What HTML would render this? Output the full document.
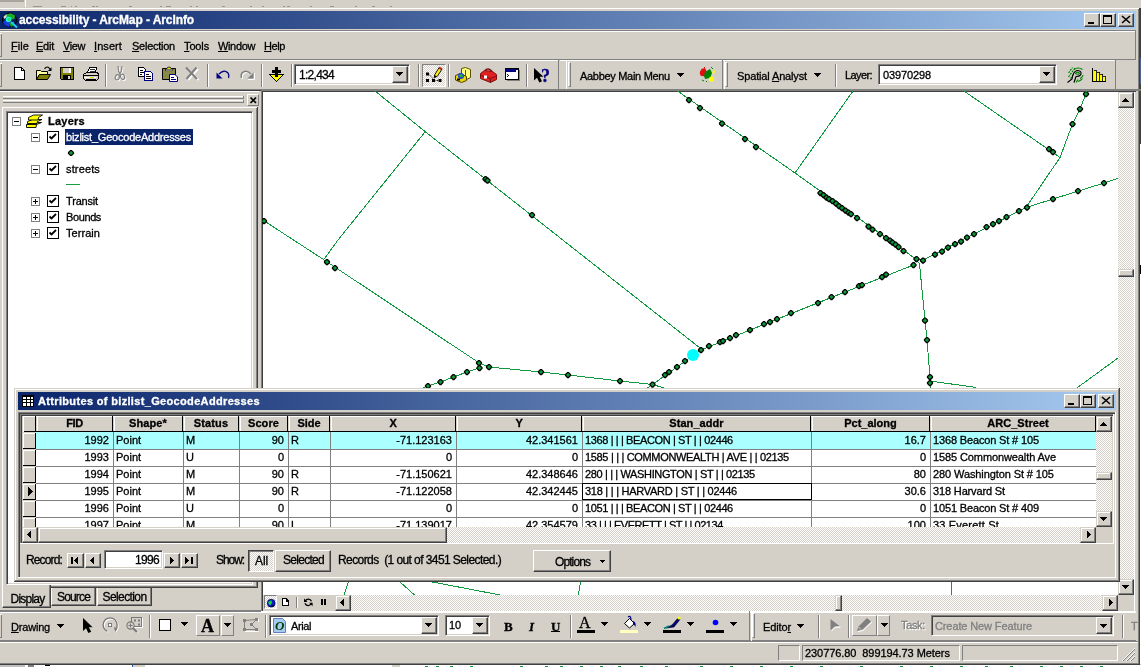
<!DOCTYPE html>
<html>
<head>
<meta charset="utf-8">
<title>accessibility - ArcMap - ArcInfo</title>
<style>
html,body{margin:0;padding:0;}
body{width:1141px;height:667px;overflow:hidden;background:#d4d0c8;}
#root{position:absolute;left:0;top:0;width:1141px;height:667px;overflow:hidden;background:#d4d0c8;will-change:transform;font-family:"Liberation Sans",sans-serif;font-size:11px;color:#000;}
#root div,#root svg{position:absolute;box-sizing:border-box;}
#root svg{display:block;}
.dither{background-image:conic-gradient(#fff 25%,#d4d0c8 0 50%,#fff 0 75%,#d4d0c8 0);background-size:2px 2px;}
u{text-decoration:underline;}
</style>
</head>
<body>
<div id="root">
<div style="left:0px;top:0px;width:1141px;height:8px;background:#d4d0c8;"></div>
<div style="left:0px;top:0px;width:24px;height:2px;background:#a9a6a0;"></div>
<div style="left:25px;top:0px;width:1px;height:7px;background:#ffffff;"></div>
<div style="left:33px;top:6px;width:8px;height:1px;background:#9a9791;"></div>
<div style="left:41px;top:6px;width:1px;height:1px;background:#9a9791;"></div>
<div style="left:61px;top:6px;width:5px;height:1px;background:#9a9791;"></div>
<div style="left:71px;top:6px;width:1px;height:1px;background:#9a9791;"></div>
<div style="left:75px;top:6px;width:2px;height:1px;background:#9a9791;"></div>
<div style="left:92px;top:6px;width:3px;height:1px;background:#9a9791;"></div>
<div style="left:96px;top:6px;width:2px;height:1px;background:#9a9791;"></div>
<div style="left:129px;top:6px;width:3px;height:1px;background:#9a9791;"></div>
<div style="left:160px;top:6px;width:2px;height:1px;background:#9a9791;"></div>
<div style="left:166px;top:6px;width:5px;height:1px;background:#9a9791;"></div>
<div style="left:190px;top:6px;width:2px;height:1px;background:#9a9791;"></div>
<div style="left:196px;top:6px;width:2px;height:1px;background:#9a9791;"></div>
<div style="left:222px;top:6px;width:3px;height:1px;background:#9a9791;"></div>
<div style="left:250px;top:6px;width:2px;height:1px;background:#9a9791;"></div>
<div style="left:262px;top:6px;width:2px;height:1px;background:#9a9791;"></div>
<div style="left:283px;top:6px;width:2px;height:1px;background:#9a9791;"></div>
<div style="left:287px;top:6px;width:3px;height:1px;background:#9a9791;"></div>
<div style="left:310px;top:6px;width:2px;height:1px;background:#9a9791;"></div>
<div style="left:330px;top:6px;width:4px;height:1px;background:#9a9791;"></div>
<div style="left:355px;top:6px;width:2px;height:1px;background:#9a9791;"></div>
<div style="left:372px;top:6px;width:3px;height:1px;background:#9a9791;"></div>
<div style="left:390px;top:6px;width:2px;height:1px;background:#9a9791;"></div>
<div style="left:0px;top:8px;width:1139px;height:1px;background:#ffffff;"></div>
<div style="left:0px;top:9px;width:1138px;height:1px;background:#d4d0c8;"></div>
<div style="left:1138px;top:9px;width:1px;height:655px;background:#808080;"></div>
<div style="left:1139px;top:8px;width:1px;height:657px;background:#404040;"></div>
<div style="left:0px;top:663px;width:1139px;height:1px;background:#808080;"></div>
<div style="left:0px;top:664px;width:1140px;height:1px;background:#404040;"></div>
<div style="left:1140px;top:0px;width:1px;height:8px;background:#d4d0c8;"></div>
<div style="left:1140px;top:8px;width:1px;height:50px;background:#404040;"></div>
<div style="left:1140px;top:58px;width:1px;height:26px;background:#506090;"></div>
<div style="left:1140px;top:84px;width:1px;height:60px;background:#404040;"></div>
<div style="left:1140px;top:144px;width:1px;height:520px;background:#fff;"></div>
<div style="left:1140px;top:265px;width:1px;height:9px;background:#000;"></div>
<div style="left:0px;top:11px;width:1136px;height:18px;background:linear-gradient(90deg,#0a246a 0%,#a6caf0 100%);"></div>
<svg style="left:2px;top:12px;width:16px;height:16px;overflow:visible" viewBox="0 0 16 16"><circle cx="7.5" cy="8" r="7" fill="#101860" stroke="#000" stroke-width="1"/>
<path d="M1,10 Q2,14 7,15 L8,11 L4,8 Z" fill="#1838e0"/>
<path d="M4,2.5 L9,1.2 L13,3.5 L12.5,7 L9,7.5 L7,5 L4,5.5 Z" fill="#18b028"/>
<path d="M1.5,4.5 L4.5,2 L4.5,5.5 L2,7 Z" fill="#d8d8d8"/>
<path d="M7,11 L12,9.5 L12.5,13 L9,15 Z" fill="#10a020"/>
<circle cx="6.5" cy="7.5" r="2.8" fill="#20f0e8"/><path d="M5.5,6 L8,6 L8.5,8.5 L6,9 Z" fill="#20e840"/>
<path d="M9,10 L15,15.5" stroke="#20d0ff" stroke-width="1.8"/></svg>
<div style="left:19.00px;top:12px;font-size:12px;line-height:16px;height:16px;white-space:pre;color:#fff;-webkit-text-stroke:0.3px #fff;letter-spacing:-0.087px;font-weight:bold;">accessibility - ArcMap - ArcInfo</div>
<div style="left:1084px;top:13px;width:16px;height:14px;background:#d4d0c8;border:1px solid;border-color:#ffffff #404040 #404040 #ffffff;box-shadow:inset -1px -1px 0 #808080;"></div>
<div style="left:1100px;top:13px;width:16px;height:14px;background:#d4d0c8;border:1px solid;border-color:#ffffff #404040 #404040 #ffffff;box-shadow:inset -1px -1px 0 #808080;"></div>
<div style="left:1118px;top:13px;width:16px;height:14px;background:#d4d0c8;border:1px solid;border-color:#ffffff #404040 #404040 #ffffff;box-shadow:inset -1px -1px 0 #808080;"></div>
<div style="left:1088px;top:22px;width:6px;height:2px;background:#000;"></div>
<div style="left:1103px;top:15px;width:9px;height:9px;border:1px solid #000;border-top-width:2px;"></div>
<svg style="left:1122px;top:16px;width:8px;height:7px;overflow:visible" viewBox="0 0 8 7"><path d="M0,0 L8,7 M8,0 L0,7" stroke="#000" stroke-width="1.6" fill="none"/></svg>
<div style="left:0px;top:30px;width:1136px;height:1px;background:#808080;"></div>
<div style="left:0px;top:31px;width:1136px;height:1px;background:#ffffff;"></div>
<div style="left:1135px;top:31px;width:1px;height:28px;background:#808080;"></div>
<div style="left:0px;top:33px;width:2px;height:1px;background:#ffffff;"></div>
<div style="left:1px;top:34px;width:1px;height:23px;background:#808080;"></div>
<div style="left:0px;top:56px;width:2px;height:1px;background:#808080;"></div>
<div style="left:0px;top:59px;width:1136px;height:1px;background:#808080;"></div>
<div style="left:11.00px;top:38px;font-size:11px;line-height:16px;height:16px;white-space:pre;color:#000;-webkit-text-stroke:0.3px #000;letter-spacing:0.070px;"><u>F</u>ile</div>
<div style="left:36.00px;top:38px;font-size:11px;line-height:16px;height:16px;white-space:pre;color:#000;-webkit-text-stroke:0.3px #000;letter-spacing:-0.242px;"><u>E</u>dit</div>
<div style="left:63.00px;top:38px;font-size:11px;line-height:16px;height:16px;white-space:pre;color:#000;-webkit-text-stroke:0.3px #000;letter-spacing:-0.410px;"><u>V</u>iew</div>
<div style="left:94.00px;top:38px;font-size:11px;line-height:16px;height:16px;white-space:pre;color:#000;-webkit-text-stroke:0.3px #000;letter-spacing:0.078px;"><u>I</u>nsert</div>
<div style="left:132.00px;top:38px;font-size:11px;line-height:16px;height:16px;white-space:pre;color:#000;-webkit-text-stroke:0.3px #000;letter-spacing:-0.253px;"><u>S</u>election</div>
<div style="left:184.00px;top:38px;font-size:11px;line-height:16px;height:16px;white-space:pre;color:#000;-webkit-text-stroke:0.3px #000;letter-spacing:-0.138px;"><u>T</u>ools</div>
<div style="left:218.00px;top:38px;font-size:11px;line-height:16px;height:16px;white-space:pre;color:#000;-webkit-text-stroke:0.3px #000;letter-spacing:-0.354px;"><u>W</u>indow</div>
<div style="left:264.00px;top:38px;font-size:11px;line-height:16px;height:16px;white-space:pre;color:#000;-webkit-text-stroke:0.3px #000;letter-spacing:-0.406px;"><u>H</u>elp</div>
<div style="left:0px;top:60px;width:1116px;height:1px;background:#ffffff;"></div>
<div style="left:0px;top:89px;width:1141px;height:1px;background:#808080;"></div>
<div style="left:1115px;top:60px;width:1px;height:29px;background:#808080;"></div>
<div style="left:0px;top:63px;width:2px;height:1px;background:#ffffff;"></div>
<div style="left:1px;top:64px;width:1px;height:23px;background:#808080;"></div>
<div style="left:0px;top:86px;width:2px;height:1px;background:#808080;"></div>
<div style="left:558px;top:60px;width:1px;height:29px;background:#808080;"></div>
<div style="left:559px;top:60px;width:1px;height:29px;background:#d4d0c8;"></div>
<div style="left:566px;top:60px;width:1px;height:29px;background:#ffffff;"></div>
<div style="left:568px;top:62px;width:3px;height:25px;border:1px solid;border-color:#ffffff #808080 #808080 #ffffff;border-bottom-color:#808080;"></div>
<div style="left:722px;top:60px;width:1px;height:29px;background:#808080;"></div>
<div style="left:724px;top:60px;width:1px;height:29px;background:#ffffff;"></div>
<div style="left:725px;top:62px;width:3px;height:25px;border:1px solid;border-color:#ffffff #808080 #808080 #ffffff;border-bottom-color:#808080;"></div>
<svg style="left:14px;top:67px;width:12px;height:14px;overflow:visible" viewBox="0 0 12 14" shape-rendering="crispEdges"><path d="M0.5,0.5 H7.5 L10.5,3.5 V12.5 H0.5 Z" fill="#fff" stroke="#000"/><path d="M7.5,0.5 V3.5 H10.5" fill="none" stroke="#000"/></svg>
<svg style="left:36px;top:66px;width:16px;height:15px;overflow:visible" viewBox="0 0 16 15"><path d="M0.5,4.5 H4.5 L5.5,5.5 H11.5 V8.5 H3.5 L0.5,13.5 Z" fill="#ffffa0" stroke="#000"/>
<path d="M0.5,13.5 L3.5,8.5 H14.5 L11.5,13.5 Z" fill="#808000" stroke="#000"/>
<path d="M8.5,2.8 Q11.2,-0.8 14,3" fill="none" stroke="#000" stroke-width="1.1"/><path d="M15.5,1.2 V5 H11.8 Z" fill="#000"/></svg>
<svg style="left:60px;top:67px;width:15px;height:14px;overflow:visible" viewBox="0 0 15 14" shape-rendering="crispEdges"><path d="M0.5,0.5 H13.5 V12.5 H1.5 L0.5,11.5 Z" fill="#808000" stroke="#000"/>
<rect x="3" y="1" width="8" height="5" fill="#d4d0c8"/><rect x="9" y="1" width="2" height="5" fill="#fff"/>
<rect x="3" y="8" width="8" height="5" fill="#000"/><rect x="8" y="9" width="2" height="3" fill="#d4d0c8"/></svg>
<svg style="left:83px;top:67px;width:17px;height:15px;overflow:visible" viewBox="0 0 17 15" shape-rendering="crispEdges"><path d="M4.5,5.5 L6.5,0.5 H13.5 L12.5,5.5" fill="#fff" stroke="#000"/>
<path d="M7,2.5 H12 M6.5,4 H11.5" stroke="#000" stroke-width="0.8"/>
<path d="M0.5,7.5 L3.5,5.5 H14.5 L15.5,7.5 V11.5 L13.5,13.5 H2.5 L0.5,11.5 Z" fill="#d4d0c8" stroke="#000"/>
<path d="M1,8.5 H15" stroke="#000"/><path d="M1,10.5 H13" stroke="#fff"/><rect x="7" y="9.5" width="4" height="1.5" fill="#e0e000"/>
<path d="M2.5,12.5 H13" stroke="#000"/></svg>
<div style="left:105px;top:64px;width:1px;height:23px;background:#808080;"></div>
<div style="left:106px;top:64px;width:1px;height:23px;background:#ffffff;"></div>
<svg style="left:114px;top:66px;width:12px;height:15px;overflow:visible" viewBox="0 0 12 15"><g fill="none" stroke="#fff" transform="translate(1,1)"><path d="M4,0 L4.6,5 L6.6,8.5 M8,0 L7.4,5 L5.2,8.5"/><ellipse cx="3.3" cy="11.3" rx="2" ry="2.7" transform="rotate(20 3.3 11.3)"/><ellipse cx="8.6" cy="10.8" rx="2" ry="2.7" transform="rotate(-20 8.6 10.8)"/></g>
<g fill="none" stroke="#808080" stroke-width="1.1"><path d="M4,0 L4.6,5 L6.6,8.5 M8,0 L7.4,5 L5.2,8.5"/><ellipse cx="3.3" cy="11.3" rx="2" ry="2.7" transform="rotate(20 3.3 11.3)"/><ellipse cx="8.6" cy="10.8" rx="2" ry="2.7" transform="rotate(-20 8.6 10.8)"/></g></svg>
<svg style="left:138px;top:67px;width:16px;height:14px;overflow:visible" viewBox="0 0 16 14" shape-rendering="crispEdges"><path d="M0.5,0.5 H5.5 L7.5,2.5 V9.5 H0.5 Z" fill="#fff" stroke="#000"/><path d="M2,3.5 H5 M2,5.5 H6 M2,7.5 H4" stroke="#000"/>
<path d="M6.5,4.5 H12.5 L14.5,6.5 V13.5 H6.5 Z" fill="#fff" stroke="#000080"/><path d="M8,7.5 H11 M8,9.5 H13 M8,11.5 H13" stroke="#000"/></svg>
<svg style="left:162px;top:66px;width:16px;height:16px;overflow:visible" viewBox="0 0 16 16"><path d="M0.5,2.5 H13.5 V13.5 H0.5 Z" fill="#8a8a48" stroke="#000"/>
<path d="M4,3.5 L5.8,1.2 H8.2 L10,3.5 Z" fill="#f0f000" stroke="#000" stroke-width="0.8"/><rect x="3.5" y="3.2" width="7" height="1.6" fill="#fff" stroke="#000" stroke-width="0.5"/>
<path d="M7.5,8.5 H13 L15.5,11 V15.5 H7.5 Z" fill="#fff" stroke="#000080"/><path d="M9,11.5 H12 M9,13.5 H14" stroke="#000080"/></svg>
<svg style="left:185px;top:67px;width:15px;height:14px;overflow:visible" viewBox="0 0 15 14"><path d="M1.5,1 L12.5,12 M12,1 L2,12" stroke="#fff" stroke-width="2" transform="translate(1,1)"/><path d="M1,0.5 L12,12 M11.5,0.5 L1.5,12" stroke="#808080" stroke-width="2"/></svg>
<div style="left:207px;top:64px;width:1px;height:23px;background:#808080;"></div>
<div style="left:208px;top:64px;width:1px;height:23px;background:#ffffff;"></div>
<svg style="left:216px;top:70px;width:14px;height:9px;overflow:visible" viewBox="0 0 14 9"><path d="M3,4 Q8,-1 12,3 Q13.5,5 12.5,8" fill="none" stroke="#000080" stroke-width="1.3"/><path d="M0.5,2.5 V8.5 H6.5 Z" fill="#000080"/></svg>
<svg style="left:240px;top:70px;width:14px;height:9px;overflow:visible" viewBox="0 0 14 9"><path d="M11,4 Q6,-1 2,3 Q0.5,5 1.5,8" fill="none" stroke="#fff" stroke-width="1.6" transform="translate(1,1)"/><path d="M11,4 Q6,-1 2,3 Q0.5,5 1.5,8" fill="none" stroke="#808080" stroke-width="1.6"/><path d="M13.5,2.5 V8.5 H7.5 Z" fill="#808080"/><path d="M8,9.5 H14.5 V3" stroke="#fff" fill="none"/></svg>
<div style="left:261px;top:64px;width:1px;height:23px;background:#808080;"></div>
<div style="left:262px;top:64px;width:1px;height:23px;background:#ffffff;"></div>
<svg style="left:269px;top:67px;width:16px;height:16px;overflow:visible" viewBox="0 0 16 16" shape-rendering="crispEdges"><path d="M0.5,7.5 H14.5 L7.5,14.5 Z" fill="#ffff00" stroke="#000"/><path d="M7.5,0 V10 M3,4.5 H12" stroke="#000" stroke-width="3"/></svg>
<div style="left:291px;top:64px;width:1px;height:23px;background:#808080;"></div>
<div style="left:292px;top:64px;width:1px;height:23px;background:#ffffff;"></div>
<div style="left:294px;top:64px;width:116px;height:21px;background:#fff;border:1px solid;border-color:#808080 #ffffff #ffffff #808080;box-shadow:inset 1px 1px 0 #404040, inset -1px -1px 0 #d4d0c8;"></div>
<div style="left:299.00px;top:67px;font-size:12px;line-height:16px;height:16px;white-space:pre;color:#000;-webkit-text-stroke:0.3px #000;letter-spacing:-0.717px;">1:2,434</div>
<div style="left:392px;top:66px;width:16px;height:17px;background:#d4d0c8;border:1px solid;border-color:#ffffff #404040 #404040 #ffffff;box-shadow:inset -1px -1px 0 #808080;"></div>
<svg style="left:396px;top:72px;width:7px;height:4px;overflow:visible" viewBox="0 0 7 4" shape-rendering="crispEdges"><polygon points="0,0 7,0 3.5,4" fill="#000"/></svg>
<div style="left:418px;top:64px;width:1px;height:23px;background:#808080;"></div>
<div style="left:419px;top:64px;width:1px;height:23px;background:#ffffff;"></div>
<div class="dither" style="left:422px;top:64px;width:24px;height:23px;border:1px solid;border-color:#808080 #ffffff #ffffff #808080;"></div>
<svg style="left:426px;top:67px;width:18px;height:17px;overflow:visible" viewBox="0 0 18 17"><path d="M1.5,7 Q5,8 8,13.5 H14" fill="none" stroke="#000" stroke-dasharray="1.2 1.2"/>
<rect x="0" y="5.5" width="3" height="3" fill="#000"/><rect x="0" y="12" width="3" height="3" fill="#000"/><rect x="6" y="12" width="3" height="3" fill="#000"/><rect x="12.5" y="12" width="3" height="3" fill="#000"/>
<path d="M8.2,10.8 L8.8,7.5 L13,0.8 L15.8,2.4 L11.5,9.2 Z" fill="#f8e820" stroke="#000" stroke-width="0.9"/><path d="M8.2,10.8 L8.7,8 L10.6,9.2 Z" fill="#000"/><path d="M12.6,1.2 L13.4,0 L16.2,1.6 L15.5,2.8 Z" fill="#e02020" stroke="#801010" stroke-width="0.5"/></svg>
<div style="left:448px;top:64px;width:1px;height:23px;background:#808080;"></div>
<div style="left:449px;top:64px;width:1px;height:23px;background:#ffffff;"></div>
<svg style="left:455px;top:67px;width:17px;height:16px;overflow:visible" viewBox="0 0 17 16"><path d="M6.5,1.5 L10.5,0.5 L15.5,2.5 V10.5 L11.5,12.5 L6.5,10 Z" fill="#ffff80" stroke="#605000"/>
<path d="M10.5,3 V12" stroke="#605000"/><path d="M0.5,8.5 L5.5,6.5 L11.5,9.5 V13.5 L6.5,15.5 L0.5,13 Z" fill="#e8d800" stroke="#504000"/>
<circle cx="6" cy="9" r="3" fill="#2040e0"/><path d="M4,8 L7,7 L8,10 L5,10 Z" fill="#20c020"/><rect x="2" y="11.5" width="3" height="2" fill="#000"/></svg>
<svg style="left:480px;top:68px;width:17px;height:15px;overflow:visible" viewBox="0 0 17 15"><path d="M0.5,5.5 L4.5,2.5 L12.5,3.5 L16.5,6.5 V11.5 L10.5,14.5 L0.5,10.5 Z" fill="#e02020" stroke="#801010"/>
<path d="M0.5,7.5 L10.5,10.5 L16.5,8" fill="none" stroke="#801010"/><path d="M5,2.5 Q8,-1 12,3.5" fill="none" stroke="#801010" stroke-width="1.5"/><rect x="4" y="7.5" width="3" height="3" fill="#fff"/><path d="M10.5,10.5 V14.5" stroke="#801010"/></svg>
<svg style="left:505px;top:68px;width:15px;height:14px;overflow:visible" viewBox="0 0 15 14" shape-rendering="crispEdges"><rect x="0.5" y="0.5" width="13" height="11" fill="#fff" stroke="#000"/><rect x="1" y="1" width="12" height="3" fill="#000080"/><rect x="11" y="1.5" width="2" height="2" fill="#fff"/><path d="M2,6 L4,7.5 L2,9" fill="none" stroke="#000" stroke-width="0.9"/><path d="M1.5,12.5 H14.5 V1.5" stroke="#808080" fill="none"/></svg>
<div style="left:526px;top:64px;width:1px;height:23px;background:#808080;"></div>
<div style="left:527px;top:64px;width:1px;height:23px;background:#ffffff;"></div>
<svg style="left:534px;top:68px;width:17px;height:15px;overflow:visible" viewBox="0 0 17 15"><path d="M0,0 V12.5 L3,9.8 L5.3,14.5 L8,13.3 L5.7,8.8 H9.5 Z" fill="#000"/></svg>
<div style="left:541.00px;top:68px;font-size:18px;line-height:16px;height:16px;white-space:pre;color:#000080;-webkit-text-stroke:0.3px #000080;font-weight:bold;font-family:'Liberation Serif',serif;">?</div>
<div style="left:580.00px;top:68px;font-size:11px;line-height:16px;height:16px;white-space:pre;color:#000;-webkit-text-stroke:0.3px #000;letter-spacing:-0.303px;">Aabbey Main Menu</div>
<svg style="left:677px;top:73px;width:7px;height:4px;overflow:visible" viewBox="0 0 7 4" shape-rendering="crispEdges"><polygon points="0,0 7,0 3.5,4" fill="#000"/></svg>
<svg style="left:699px;top:66px;width:18px;height:18px;overflow:visible" viewBox="0 0 18 18"><circle cx="4" cy="7" r="3.2" fill="#e01010"/><path d="M2,3 L6,2 L8,6 L4,8Z" fill="#e01010"/>
<path d="M6,6 L11,3 L13,7 L11,12 L6,13 L5,10 Z" fill="#008000"/><circle cx="9" cy="9" r="3" fill="#008000"/>
<circle cx="12.5" cy="13" r="2.6" fill="#ffff00"/><path d="M13,6 L16,4 L15,9 Z" fill="#ffff00"/><path d="M12,1 L14,3 M3,14 L5,15 M7,15 L8,16" stroke="#008000"/><path d="M5,1 L6,2" stroke="#e01010"/></svg>
<div style="left:737.00px;top:68px;font-size:11px;line-height:16px;height:16px;white-space:pre;color:#000;-webkit-text-stroke:0.3px #000;letter-spacing:-0.147px;">Spatial <u>A</u>nalyst</div>
<svg style="left:814px;top:73px;width:7px;height:4px;overflow:visible" viewBox="0 0 7 4" shape-rendering="crispEdges"><polygon points="0,0 7,0 3.5,4" fill="#000"/></svg>
<div style="left:835px;top:64px;width:1px;height:23px;background:#808080;"></div>
<div style="left:836px;top:64px;width:1px;height:23px;background:#ffffff;"></div>
<div style="left:845.00px;top:67px;font-size:11px;line-height:16px;height:16px;white-space:pre;color:#000;-webkit-text-stroke:0.3px #000;letter-spacing:-0.599px;">Layer:</div>
<div style="left:878px;top:64px;width:179px;height:21px;background:#fff;border:1px solid;border-color:#808080 #ffffff #ffffff #808080;box-shadow:inset 1px 1px 0 #404040, inset -1px -1px 0 #d4d0c8;"></div>
<div style="left:883.00px;top:67px;font-size:11px;line-height:16px;height:16px;white-space:pre;color:#000;-webkit-text-stroke:0.3px #000;letter-spacing:-0.125px;">03970298</div>
<div style="left:1039px;top:66px;width:16px;height:17px;background:#d4d0c8;border:1px solid;border-color:#ffffff #404040 #404040 #ffffff;box-shadow:inset -1px -1px 0 #808080;"></div>
<svg style="left:1043px;top:72px;width:7px;height:4px;overflow:visible" viewBox="0 0 7 4" shape-rendering="crispEdges"><polygon points="0,0 7,0 3.5,4" fill="#000"/></svg>
<svg style="left:1067px;top:66px;width:17px;height:17px;overflow:visible" viewBox="0 0 17 17"><path d="M1.5,7 L5.5,1.5 M1.5,11 L8,2 M3.5,12.5 L6.5,8.5" stroke="#008000" stroke-dasharray="2 1" fill="none" stroke-width="1.2"/>
<path d="M7,3.5 Q11,0.5 15.5,3.5 M13,12.5 Q16,11 16,9 M11,15.5 Q14,14.5 15.5,12.5 M9,16.5 L11,13.5" stroke="#008000" fill="none" stroke-width="1.2"/>
<path d="M0.5,16.5 L5,13 Q6,5.5 10,4.5 Q14.5,4.5 14,8 Q13,10.5 9,10.5 L7,16.5" fill="none" stroke="#000" stroke-width="1.2"/><ellipse cx="10.5" cy="7.3" rx="2" ry="1" fill="none" stroke="#008000" stroke-width="1.1"/></svg>
<svg style="left:1091px;top:67px;width:16px;height:16px;overflow:visible" viewBox="0 0 16 16" shape-rendering="crispEdges"><path d="M1.5,1 V14.5 H15" fill="none" stroke="#000"/><rect x="3" y="4" width="2" height="10" fill="#ffff00"/><rect x="6" y="5" width="2" height="9" fill="#ffff00"/><rect x="9" y="7" width="2" height="7" fill="#ffff00"/><rect x="12" y="10" width="2" height="4" fill="#ffff00"/>
<path d="M2.5,3.5 H5.5 V5 H8.5 V7 H11.5 V9.5 H14.5 V14" fill="none" stroke="#000" stroke-width="0.8"/><path d="M5.5,5V14M8.5,7V14M11.5,9.5V14" stroke="#000" stroke-width="0.8"/></svg>
<div style="left:0px;top:90px;width:262px;height:521px;background:#d4d0c8;"></div>
<div style="left:0px;top:90px;width:262px;height:1px;background:#404040;"></div>
<div style="left:0px;top:91px;width:259px;height:1px;background:#ffffff;"></div>
<div style="left:3px;top:96px;width:241px;height:1px;background:#ffffff;"></div>
<div style="left:3px;top:97px;width:241px;height:1px;background:#d4d0c8;"></div>
<div style="left:3px;top:98px;width:241px;height:1px;background:#808080;"></div>
<div style="left:243px;top:96px;width:1px;height:3px;background:#808080;"></div>
<div style="left:3px;top:100px;width:241px;height:1px;background:#ffffff;"></div>
<div style="left:3px;top:101px;width:241px;height:1px;background:#d4d0c8;"></div>
<div style="left:3px;top:102px;width:241px;height:1px;background:#808080;"></div>
<div style="left:243px;top:100px;width:1px;height:3px;background:#808080;"></div>
<div style="left:247px;top:94px;width:12px;height:12px;border:1px solid;border-color:#ffffff #808080 #808080 #ffffff;"></div>
<svg style="left:250px;top:97px;width:7px;height:7px;overflow:visible" viewBox="0 0 7 7"><path d="M0.5,0.5 L6,6 M6,0.5 L0.5,6" stroke="#000" stroke-width="1.7" fill="none"/></svg>
<div style="left:2px;top:107px;width:255px;height:1px;background:#ffffff;"></div>
<div style="left:2px;top:107px;width:1px;height:500px;background:#ffffff;"></div>
<div style="left:256px;top:108px;width:1px;height:480px;background:#808080;"></div>
<div style="left:257px;top:107px;width:1px;height:481px;background:#404040;"></div>
<div style="left:6px;top:111px;width:247px;height:474px;background:#fff;border:1px solid;border-color:#808080 #ffffff #ffffff #808080;box-shadow:inset 1px 1px 0 #404040, inset -1px -1px 0 #d4d0c8;"></div>
<div style="left:12px;top:117px;width:9px;height:9px;background:#fff;border:1px solid #808080;"></div>
<div style="left:14px;top:121px;width:5px;height:1px;background:#000;"></div>
<svg style="left:26px;top:114px;width:17px;height:15px;overflow:visible" viewBox="0 0 17 15"><path d="M0.5,10.5 L5.5,8.5 H15.5 L10.5,10.5 L10,13.5 L0.5,13.5Z M0.5,10.5H10.5" fill="#ffff00" stroke="#000" stroke-width="0.9"/>
<path d="M1.5,7.5 L6.5,5.5 H16 L11.5,7.5 L11,9.5 H1.5 Z" fill="#ffff00" stroke="#000" stroke-width="0.9"/>
<path d="M2.5,3.5 L7.5,1 H16.5 L12.5,3.5 L12,6 H2.5 Z" fill="#ffff00" stroke="#000" stroke-width="0.9"/></svg>
<div style="left:48.00px;top:113px;font-size:11px;line-height:16px;height:16px;white-space:pre;color:#000;-webkit-text-stroke:0.3px #000;letter-spacing:0.250px;font-weight:bold;">Layers</div>
<div style="left:31px;top:133px;width:9px;height:9px;background:#fff;border:1px solid #808080;"></div>
<div style="left:33px;top:137px;width:5px;height:1px;background:#000;"></div>
<div style="left:47px;top:131px;width:12px;height:12px;background:#fff;border:1px solid #000;"></div>
<svg style="left:49px;top:134px;width:8px;height:7px;overflow:visible" viewBox="0 0 8 7"><path d="M0.5,2.5 L2.5,4.5 L7,0" fill="none" stroke="#000" stroke-width="1.8"/></svg>
<div style="left:65px;top:129px;width:128px;height:16px;background:#0a246a;"></div>
<div style="left:66.00px;top:129px;font-size:11px;line-height:16px;height:16px;white-space:pre;color:#fff;-webkit-text-stroke:0.3px #fff;letter-spacing:-0.221px;">bizlist_GeocodeAddresses</div>
<svg style="left:67px;top:149px;width:8px;height:8px;overflow:visible" viewBox="0 0 8 8"><path d="M3.5,1.5 h1 l2,2 v1 l-2,2 h-1 l-2,-2 v-1 z" fill="#0a9a38" stroke="#000" stroke-width="1.2"/></svg>
<div style="left:31px;top:165px;width:9px;height:9px;background:#fff;border:1px solid #808080;"></div>
<div style="left:33px;top:169px;width:5px;height:1px;background:#000;"></div>
<div style="left:47px;top:163px;width:12px;height:12px;background:#fff;border:1px solid #000;"></div>
<svg style="left:49px;top:166px;width:8px;height:7px;overflow:visible" viewBox="0 0 8 7"><path d="M0.5,2.5 L2.5,4.5 L7,0" fill="none" stroke="#000" stroke-width="1.8"/></svg>
<div style="left:66.00px;top:161px;font-size:11px;line-height:16px;height:16px;white-space:pre;color:#000;-webkit-text-stroke:0.3px #000;letter-spacing:0.138px;">streets</div>
<div style="left:66px;top:184px;width:14px;height:1px;background:#10a040;"></div>
<div style="left:31px;top:197px;width:9px;height:9px;background:#fff;border:1px solid #808080;"></div>
<div style="left:33px;top:201px;width:5px;height:1px;background:#000;"></div>
<div style="left:35px;top:199px;width:1px;height:5px;background:#000;"></div>
<div style="left:47px;top:195px;width:12px;height:12px;background:#fff;border:1px solid #000;"></div>
<svg style="left:49px;top:198px;width:8px;height:7px;overflow:visible" viewBox="0 0 8 7"><path d="M0.5,2.5 L2.5,4.5 L7,0" fill="none" stroke="#000" stroke-width="1.8"/></svg>
<div style="left:66.00px;top:193px;font-size:11px;line-height:16px;height:16px;white-space:pre;color:#000;-webkit-text-stroke:0.3px #000;letter-spacing:-0.174px;">Transit</div>
<div style="left:31px;top:213px;width:9px;height:9px;background:#fff;border:1px solid #808080;"></div>
<div style="left:33px;top:217px;width:5px;height:1px;background:#000;"></div>
<div style="left:35px;top:215px;width:1px;height:5px;background:#000;"></div>
<div style="left:47px;top:211px;width:12px;height:12px;background:#fff;border:1px solid #000;"></div>
<svg style="left:49px;top:214px;width:8px;height:7px;overflow:visible" viewBox="0 0 8 7"><path d="M0.5,2.5 L2.5,4.5 L7,0" fill="none" stroke="#000" stroke-width="1.8"/></svg>
<div style="left:66.00px;top:209px;font-size:11px;line-height:16px;height:16px;white-space:pre;color:#000;-webkit-text-stroke:0.3px #000;letter-spacing:-0.391px;">Bounds</div>
<div style="left:31px;top:229px;width:9px;height:9px;background:#fff;border:1px solid #808080;"></div>
<div style="left:33px;top:233px;width:5px;height:1px;background:#000;"></div>
<div style="left:35px;top:231px;width:1px;height:5px;background:#000;"></div>
<div style="left:47px;top:227px;width:12px;height:12px;background:#fff;border:1px solid #000;"></div>
<svg style="left:49px;top:230px;width:8px;height:7px;overflow:visible" viewBox="0 0 8 7"><path d="M0.5,2.5 L2.5,4.5 L7,0" fill="none" stroke="#000" stroke-width="1.8"/></svg>
<div style="left:66.00px;top:225px;font-size:11px;line-height:16px;height:16px;white-space:pre;color:#000;-webkit-text-stroke:0.3px #000;letter-spacing:0.054px;">Terrain</div>
<div style="left:51px;top:586px;width:206px;height:1px;background:#808080;"></div>
<div style="left:51px;top:587px;width:207px;height:1px;background:#404040;"></div>
<div style="left:2px;top:585px;width:49px;height:23px;background:#d4d0c8;border:1px solid;border-color:#d4d0c8 #404040 #404040 #ffffff;border-top:none;box-shadow:inset -1px -1px 0 #808080;"></div>
<div style="left:51px;top:588px;width:45px;height:18px;background:#d4d0c8;border:1px solid;border-color:#d4d0c8 #404040 #404040 #ffffff;border-top:none;box-shadow:inset -1px -1px 0 #808080;"></div>
<div style="left:97px;top:588px;width:55px;height:18px;background:#d4d0c8;border:1px solid;border-color:#d4d0c8 #404040 #404040 #ffffff;border-top:none;box-shadow:inset -1px -1px 0 #808080;"></div>
<div style="left:10.50px;top:591px;font-size:12px;line-height:16px;height:16px;white-space:pre;color:#000;-webkit-text-stroke:0.3px #000;letter-spacing:-0.766px;">Display</div>
<div style="left:57.00px;top:589px;font-size:12px;line-height:16px;height:16px;white-space:pre;color:#000;-webkit-text-stroke:0.3px #000;letter-spacing:-0.836px;">Source</div>
<div style="left:102.50px;top:589px;font-size:12px;line-height:16px;height:16px;white-space:pre;color:#000;-webkit-text-stroke:0.3px #000;letter-spacing:-0.595px;">Selection</div>
<div style="left:0px;top:610px;width:262px;height:1px;background:#808080;"></div>
<div style="left:261px;top:90px;width:880px;height:1px;background:#808080;"></div>
<div style="left:262px;top:91px;width:874px;height:1px;background:#404040;"></div>
<div style="left:261px;top:90px;width:1px;height:522px;background:#808080;"></div>
<div style="left:262px;top:91px;width:1px;height:520px;background:#404040;"></div>
<div style="left:263px;top:92px;width:855px;height:503px;background:#fff;"></div>
<div style="left:1134px;top:92px;width:1px;height:520px;background:#ffffff;"></div>
<div style="left:1135px;top:92px;width:1px;height:520px;background:#d4d0c8;"></div>
<div style="left:261px;top:611px;width:875px;height:1px;background:#ffffff;"></div>
<svg style="left:262px;top:92px;width:856px;height:503px;overflow:visible" viewBox="0 0 856 503" shape-rendering="crispEdges"><polyline points="113,-1 163,39.5 283,134 438,256" fill="none" stroke="#0f9a3e" stroke-width="1"/><polyline points="163,40 76,148 61.5,168" fill="none" stroke="#0f9a3e" stroke-width="1"/><polyline points="0,127.5 31.5,148 61.5,167.5 216.5,270.5 227,275 279,280 306,283 358,289 390.5,292.5 402,296" fill="none" stroke="#0f9a3e" stroke-width="1"/><polyline points="217,271 217.5,276 205,280 191.5,285 178.5,290 166,294 158,297" fill="none" stroke="#0f9a3e" stroke-width="1"/><polyline points="384,297 390.5,292.5 439,258 488,238 568,206 651.5,173 654.5,167" fill="none" stroke="#0f9a3e" stroke-width="1"/><polyline points="415.5,-1 533,81 654.5,167.5" fill="none" stroke="#0f9a3e" stroke-width="1"/><polyline points="533,81 568,31.5 591,-1" fill="none" stroke="#0f9a3e" stroke-width="1"/><polyline points="654.5,167.5 661,168 764,115.5 791,107 842,91 856,86.5" fill="none" stroke="#0f9a3e" stroke-width="1"/><polyline points="702,-1 798,65.5" fill="none" stroke="#0f9a3e" stroke-width="1"/><polyline points="825,-1 818,17 810.5,32 798,65.5 764,115.5" fill="none" stroke="#0f9a3e" stroke-width="1"/><polyline points="654.5,167.5 657.5,172 663,228.5 665,248 668,285 669,297" fill="none" stroke="#0f9a3e" stroke-width="1"/><polyline points="668,289 714.5,295.5" fill="none" stroke="#0f9a3e" stroke-width="1"/><polyline points="813.5,297 856,266" fill="none" stroke="#0f9a3e" stroke-width="1"/><polyline points="86.5,490 82,503" fill="none" stroke="#0f9a3e" stroke-width="1"/><polyline points="138,490 152.5,503" fill="none" stroke="#0f9a3e" stroke-width="1"/><polyline points="170.5,490 238,503" fill="none" stroke="#0f9a3e" stroke-width="1"/><polyline points="318.5,490 316.29999999999995,503" fill="none" stroke="#0f9a3e" stroke-width="1"/><polyline points="689,490 689.5,503" fill="none" stroke="#0f9a3e" stroke-width="1"/></svg>
<svg style="left:262px;top:92px;width:856px;height:503px;overflow:hidden" viewBox="0 0 856 503"><defs><path id="dm" d="M-0.5,-2.5 h1 l2,2 v1 l-2,2 h-1 l-2,-2 v-1 z" fill="#0a9a38" stroke="#000" stroke-width="1.25"/></defs><use href="#dm" x="2" y="129"/><use href="#dm" x="223.5" y="87"/><use href="#dm" x="225.5" y="88.5"/><use href="#dm" x="270" y="123"/><use href="#dm" x="65" y="170"/><use href="#dm" x="73" y="176"/><use href="#dm" x="217" y="271"/><use href="#dm" x="227" y="275"/><use href="#dm" x="279" y="280"/><use href="#dm" x="217.5" y="276"/><use href="#dm" x="205" y="280"/><use href="#dm" x="191.5" y="285"/><use href="#dm" x="178.5" y="290"/><use href="#dm" x="166" y="294"/><use href="#dm" x="306" y="283"/><use href="#dm" x="358" y="289"/><use href="#dm" x="390.5" y="292.5"/><use href="#dm" x="403" y="283"/><use href="#dm" x="407" y="280"/><use href="#dm" x="415" y="275"/><use href="#dm" x="423" y="269"/><use href="#dm" x="439" y="258"/><use href="#dm" x="447" y="254"/><use href="#dm" x="458" y="250"/><use href="#dm" x="461" y="249"/><use href="#dm" x="468" y="246"/><use href="#dm" x="474" y="243"/><use href="#dm" x="488" y="238"/><use href="#dm" x="502" y="232"/><use href="#dm" x="508" y="230"/><use href="#dm" x="515" y="227"/><use href="#dm" x="529" y="221"/><use href="#dm" x="556" y="211"/><use href="#dm" x="569.5" y="205"/><use href="#dm" x="583" y="200"/><use href="#dm" x="597" y="194"/><use href="#dm" x="600" y="193"/><use href="#dm" x="620" y="185"/><use href="#dm" x="624" y="182.5"/><use href="#dm" x="651.5" y="173"/><use href="#dm" x="654.5" y="167"/><use href="#dm" x="661" y="168.5"/><use href="#dm" x="427" y="8"/><use href="#dm" x="438" y="16"/><use href="#dm" x="460" y="31.5"/><use href="#dm" x="483" y="47"/><use href="#dm" x="494" y="55"/><use href="#dm" x="558.5" y="101"/><use href="#dm" x="561.5" y="103"/><use href="#dm" x="564.5" y="105.5"/><use href="#dm" x="567" y="107"/><use href="#dm" x="570.5" y="109"/><use href="#dm" x="574" y="111.5"/><use href="#dm" x="577" y="114"/><use href="#dm" x="580" y="116"/><use href="#dm" x="583.5" y="118.5"/><use href="#dm" x="586.5" y="120.5"/><use href="#dm" x="589" y="122"/><use href="#dm" x="595" y="126"/><use href="#dm" x="606.5" y="134.5"/><use href="#dm" x="610.5" y="137.5"/><use href="#dm" x="618" y="142"/><use href="#dm" x="624" y="146"/><use href="#dm" x="628" y="148.5"/><use href="#dm" x="630.5" y="150.5"/><use href="#dm" x="633.5" y="152.5"/><use href="#dm" x="636.5" y="155"/><use href="#dm" x="641.5" y="159"/><use href="#dm" x="673" y="162.5"/><use href="#dm" x="680" y="159.5"/><use href="#dm" x="686" y="155.5"/><use href="#dm" x="693" y="152"/><use href="#dm" x="699" y="149.5"/><use href="#dm" x="705" y="145.5"/><use href="#dm" x="712" y="142"/><use href="#dm" x="724.5" y="135"/><use href="#dm" x="731" y="132"/><use href="#dm" x="737" y="129"/><use href="#dm" x="744.5" y="125"/><use href="#dm" x="757" y="119"/><use href="#dm" x="765" y="115.5"/><use href="#dm" x="791" y="107"/><use href="#dm" x="816" y="99"/><use href="#dm" x="842" y="91"/><use href="#dm" x="787" y="57"/><use href="#dm" x="791" y="60"/><use href="#dm" x="824" y="2"/><use href="#dm" x="818" y="17"/><use href="#dm" x="810.5" y="32"/><use href="#dm" x="663" y="228.5"/><use href="#dm" x="665" y="248"/><use href="#dm" x="668" y="285"/><use href="#dm" x="668" y="291"/><circle cx="431" cy="263" r="6" fill="#00ffff"/></svg>
<div class="dither" style="left:1118px;top:92px;width:16px;height:503px;"></div>
<div style="left:1118px;top:92px;width:16px;height:16px;background:#d4d0c8;border:1px solid;border-color:#d4d0c8 #404040 #404040 #d4d0c8;box-shadow:inset -1px -1px 0 #808080, inset 1px 1px 0 #ffffff;"></div>
<svg style="left:1122px;top:98px;width:7px;height:4px;overflow:visible" viewBox="0 0 7 4" shape-rendering="crispEdges"><polygon points="3.5,0 7,4 0,4" fill="#000"/></svg>
<div style="left:1118px;top:269px;width:16px;height:8px;background:#d4d0c8;border:1px solid;border-color:#d4d0c8 #404040 #404040 #d4d0c8;box-shadow:inset -1px -1px 0 #808080, inset 1px 1px 0 #ffffff;"></div>
<div style="left:1118px;top:579px;width:16px;height:16px;background:#d4d0c8;border:1px solid;border-color:#d4d0c8 #404040 #404040 #d4d0c8;box-shadow:inset -1px -1px 0 #808080, inset 1px 1px 0 #ffffff;"></div>
<svg style="left:1122px;top:585px;width:7px;height:4px;overflow:visible" viewBox="0 0 7 4" shape-rendering="crispEdges"><polygon points="0,0 7,0 3.5,4" fill="#000"/></svg>
<div style="left:263px;top:595px;width:871px;height:16px;background:#d4d0c8;"></div>
<div class="dither" style="left:351px;top:595px;width:751px;height:16px;"></div>
<div class="dither" style="left:264px;top:595px;width:13px;height:14px;border:1px solid;border-color:#808080 #ffffff #ffffff #808080;"></div>
<svg style="left:267px;top:599px;width:9px;height:9px;overflow:visible" viewBox="0 0 9 9"><circle cx="4.2" cy="4.2" r="3.9" fill="#0a18d8" stroke="#000040" stroke-width="0.7"/><path d="M1.2,3 L4.2,1.2 L5.2,3.8 L3.2,6.2 L1.8,5.2Z" fill="#18d838"/><path d="M3,7.4 L6.2,7.4 L7.4,5.4 L5,6.4Z" fill="#000"/></svg>
<svg style="left:282px;top:598px;width:7px;height:9px;overflow:visible" viewBox="0 0 7 9" shape-rendering="crispEdges"><path d="M0.5,0.5 H4 L6.5,3 V7.5 H0.5 Z" fill="#fff" stroke="#000"/><path d="M4,0.5V3H6.5" fill="none" stroke="#000"/></svg>
<div style="left:296px;top:597px;width:1px;height:11px;background:#808080;"></div>
<div style="left:297px;top:597px;width:1px;height:11px;background:#ffffff;"></div>
<svg style="left:304px;top:598px;width:9px;height:9px;overflow:visible" viewBox="0 0 9 9"><path d="M7.5,3.2 A3.4,3.4 0 0 0 1.3,3 M1,5.3 A3.4,3.4 0 0 0 7.2,5.8" fill="none" stroke="#000" stroke-width="1.3"/><path d="M0,0.5 V4 H3.5Z M8.6,8.2 V4.7 H5.1Z" fill="#000"/></svg>
<div style="left:321px;top:599px;width:2px;height:6px;background:#000;"></div>
<div style="left:324px;top:599px;width:2px;height:6px;background:#000;"></div>
<div style="left:335px;top:595px;width:16px;height:16px;background:#d4d0c8;border:1px solid;border-color:#d4d0c8 #404040 #404040 #d4d0c8;box-shadow:inset -1px -1px 0 #808080, inset 1px 1px 0 #ffffff;"></div>
<svg style="left:340px;top:599px;width:4px;height:7px;overflow:visible" viewBox="0 0 4 7" shape-rendering="crispEdges"><polygon points="4,0 4,7 0,3.5" fill="#000"/></svg>
<div style="left:835px;top:595px;width:7px;height:16px;background:#d4d0c8;border:1px solid;border-color:#d4d0c8 #404040 #404040 #d4d0c8;box-shadow:inset -1px -1px 0 #808080, inset 1px 1px 0 #ffffff;"></div>
<div style="left:1102px;top:595px;width:16px;height:16px;background:#d4d0c8;border:1px solid;border-color:#d4d0c8 #404040 #404040 #d4d0c8;box-shadow:inset -1px -1px 0 #808080, inset 1px 1px 0 #ffffff;"></div>
<svg style="left:1109px;top:599px;width:4px;height:7px;overflow:visible" viewBox="0 0 4 7" shape-rendering="crispEdges"><polygon points="0,0 0,7 4,3.5" fill="#000"/></svg>
<div style="left:14px;top:388px;width:1106px;height:194px;background:#d4d0c8;"></div>
<div style="left:15px;top:389px;width:1103px;height:1px;background:#ffffff;"></div>
<div style="left:15px;top:389px;width:1px;height:191px;background:#ffffff;"></div>
<div style="left:1118px;top:389px;width:1px;height:192px;background:#808080;"></div>
<div style="left:1119px;top:388px;width:1px;height:194px;background:#404040;"></div>
<div style="left:15px;top:580px;width:1104px;height:1px;background:#808080;"></div>
<div style="left:14px;top:581px;width:1106px;height:1px;background:#404040;"></div>
<div style="left:18px;top:392px;width:1098px;height:18px;background:linear-gradient(90deg,#0a246a 0%,#a6caf0 100%);"></div>
<div style="left:22px;top:395px;width:12px;height:12px;background:#fff;border:1px solid #000;"></div>
<div style="left:23px;top:396px;width:10px;height:1px;background:#000;"></div>
<div style="left:26px;top:397px;width:1px;height:9px;background:#000;"></div>
<div style="left:30px;top:397px;width:1px;height:9px;background:#000;"></div>
<div style="left:23px;top:399px;width:10px;height:1px;background:#000;"></div>
<div style="left:23px;top:402px;width:10px;height:1px;background:#000;"></div>
<div style="left:38.00px;top:393px;font-size:11px;line-height:16px;height:16px;white-space:pre;color:#fff;-webkit-text-stroke:0.3px #fff;letter-spacing:0.339px;font-weight:bold;">Attributes of bizlist_GeocodeAddresses</div>
<div style="left:1064px;top:394px;width:16px;height:14px;background:#d4d0c8;border:1px solid;border-color:#ffffff #404040 #404040 #ffffff;box-shadow:inset -1px -1px 0 #808080;"></div>
<div style="left:1080px;top:394px;width:16px;height:14px;background:#d4d0c8;border:1px solid;border-color:#ffffff #404040 #404040 #ffffff;box-shadow:inset -1px -1px 0 #808080;"></div>
<div style="left:1098px;top:394px;width:16px;height:14px;background:#d4d0c8;border:1px solid;border-color:#ffffff #404040 #404040 #ffffff;box-shadow:inset -1px -1px 0 #808080;"></div>
<div style="left:1068px;top:403px;width:6px;height:2px;background:#000;"></div>
<div style="left:1083px;top:396px;width:9px;height:9px;border:1px solid #000;border-top-width:2px;"></div>
<svg style="left:1102px;top:397px;width:8px;height:7px;overflow:visible" viewBox="0 0 8 7"><path d="M0,0 L8,7 M8,0 L0,7" stroke="#000" stroke-width="1.6" fill="none"/></svg>
<div style="left:18px;top:412px;width:1098px;height:1px;background:#808080;"></div>
<div style="left:18px;top:412px;width:1px;height:166px;background:#808080;"></div>
<div style="left:19px;top:413px;width:1096px;height:1px;background:#404040;"></div>
<div style="left:19px;top:413px;width:1px;height:164px;background:#404040;"></div>
<div style="left:1115px;top:412px;width:1px;height:166px;background:#ffffff;"></div>
<div style="left:18px;top:577px;width:1098px;height:1px;background:#ffffff;"></div>
<div style="left:20px;top:414px;width:1094px;height:1px;background:#808080;"></div>
<div style="left:20px;top:414px;width:1px;height:130px;background:#808080;"></div>
<div style="left:21px;top:415px;width:1092px;height:1px;background:#404040;"></div>
<div style="left:21px;top:415px;width:1px;height:128px;background:#404040;"></div>
<div style="left:22px;top:416px;width:1074px;height:111px;background:#fff;"></div>
<div style="left:22px;top:416px;width:1074px;height:16px;background:#d4d0c8;"></div>
<div style="left:22px;top:432px;width:14px;height:95px;background:#d4d0c8;"></div>
<div style="left:23px;top:416px;width:1073px;height:1px;background:#ffffff;"></div>
<div style="left:23px;top:431px;width:1073px;height:1px;background:#000;"></div>
<div style="left:23px;top:416px;width:1px;height:16px;background:#ffffff;"></div>
<div style="left:35px;top:416px;width:1px;height:16px;background:#000;"></div>
<div style="left:37px;top:416px;width:1px;height:15px;background:#ffffff;"></div>
<div style="left:112px;top:416px;width:1px;height:16px;background:#000;"></div>
<div style="left:66.25px;top:415px;font-size:11px;line-height:16px;height:16px;white-space:pre;color:#000;-webkit-text-stroke:0.3px #000;letter-spacing:-0.406px;font-weight:bold;">FID</div>
<div style="left:114px;top:416px;width:1px;height:15px;background:#ffffff;"></div>
<div style="left:182px;top:416px;width:1px;height:16px;background:#000;"></div>
<div style="left:129.00px;top:415px;font-size:11px;line-height:16px;height:16px;white-space:pre;color:#000;-webkit-text-stroke:0.3px #000;letter-spacing:0.115px;font-weight:bold;">Shape*</div>
<div style="left:184px;top:416px;width:1px;height:15px;background:#ffffff;"></div>
<div style="left:238px;top:416px;width:1px;height:16px;background:#000;"></div>
<div style="left:193.75px;top:415px;font-size:11px;line-height:16px;height:16px;white-space:pre;color:#000;-webkit-text-stroke:0.3px #000;letter-spacing:0.146px;font-weight:bold;">Status</div>
<div style="left:240px;top:416px;width:1px;height:15px;background:#ffffff;"></div>
<div style="left:287px;top:416px;width:1px;height:16px;background:#000;"></div>
<div style="left:248.00px;top:415px;font-size:11px;line-height:16px;height:16px;white-space:pre;color:#000;-webkit-text-stroke:0.3px #000;letter-spacing:0.081px;font-weight:bold;">Score</div>
<div style="left:289px;top:416px;width:1px;height:15px;background:#ffffff;"></div>
<div style="left:329px;top:416px;width:1px;height:16px;background:#000;"></div>
<div style="left:297.50px;top:415px;font-size:11px;line-height:16px;height:16px;white-space:pre;color:#000;-webkit-text-stroke:0.3px #000;letter-spacing:-0.062px;font-weight:bold;">Side</div>
<div style="left:331px;top:416px;width:1px;height:15px;background:#ffffff;"></div>
<div style="left:455px;top:416px;width:1px;height:16px;background:#000;"></div>
<div style="left:389.50px;top:415px;font-size:11px;line-height:16px;height:16px;white-space:pre;color:#000;-webkit-text-stroke:0.3px #000;font-weight:bold;">X</div>
<div style="left:457px;top:416px;width:1px;height:15px;background:#ffffff;"></div>
<div style="left:581px;top:416px;width:1px;height:16px;background:#000;"></div>
<div style="left:515.50px;top:415px;font-size:11px;line-height:16px;height:16px;white-space:pre;color:#000;-webkit-text-stroke:0.3px #000;font-weight:bold;">Y</div>
<div style="left:583px;top:416px;width:1px;height:15px;background:#ffffff;"></div>
<div style="left:810px;top:416px;width:1px;height:16px;background:#000;"></div>
<div style="left:669.25px;top:415px;font-size:11px;line-height:16px;height:16px;white-space:pre;color:#000;-webkit-text-stroke:0.3px #000;letter-spacing:0.076px;font-weight:bold;">Stan_addr</div>
<div style="left:812px;top:416px;width:1px;height:15px;background:#ffffff;"></div>
<div style="left:929px;top:416px;width:1px;height:16px;background:#000;"></div>
<div style="left:844.25px;top:415px;font-size:11px;line-height:16px;height:16px;white-space:pre;color:#000;-webkit-text-stroke:0.3px #000;letter-spacing:-0.010px;font-weight:bold;">Pct_along</div>
<div style="left:931px;top:416px;width:1px;height:15px;background:#ffffff;"></div>
<div style="left:1095px;top:416px;width:1px;height:16px;background:#000;"></div>
<div style="left:987.25px;top:415px;font-size:11px;line-height:16px;height:16px;white-space:pre;color:#000;-webkit-text-stroke:0.3px #000;letter-spacing:0.037px;font-weight:bold;">ARC_Street</div>
<div style="left:36px;top:432px;width:1060px;height:17px;background:#aaffff;"></div>
<div style="left:23px;top:433px;width:12px;height:1px;background:#ffffff;"></div>
<div style="left:23px;top:433px;width:1px;height:15px;background:#ffffff;"></div>
<div style="left:23px;top:448px;width:13px;height:1px;background:#000;"></div>
<div style="left:35px;top:433px;width:1px;height:16px;background:#000;"></div>
<div style="left:36px;top:449px;width:1060px;height:1px;background:#808080;"></div>
<div style="left:23px;top:450px;width:12px;height:1px;background:#ffffff;"></div>
<div style="left:23px;top:450px;width:1px;height:15px;background:#ffffff;"></div>
<div style="left:23px;top:465px;width:13px;height:1px;background:#000;"></div>
<div style="left:35px;top:450px;width:1px;height:16px;background:#000;"></div>
<div style="left:36px;top:466px;width:1060px;height:1px;background:#808080;"></div>
<div style="left:23px;top:467px;width:12px;height:1px;background:#ffffff;"></div>
<div style="left:23px;top:467px;width:1px;height:15px;background:#ffffff;"></div>
<div style="left:23px;top:482px;width:13px;height:1px;background:#000;"></div>
<div style="left:35px;top:467px;width:1px;height:16px;background:#000;"></div>
<div style="left:36px;top:483px;width:1060px;height:1px;background:#808080;"></div>
<div style="left:23px;top:484px;width:12px;height:1px;background:#ffffff;"></div>
<div style="left:23px;top:484px;width:1px;height:15px;background:#ffffff;"></div>
<div style="left:23px;top:499px;width:13px;height:1px;background:#000;"></div>
<div style="left:35px;top:484px;width:1px;height:16px;background:#000;"></div>
<div style="left:36px;top:500px;width:1060px;height:1px;background:#808080;"></div>
<div style="left:23px;top:501px;width:12px;height:1px;background:#ffffff;"></div>
<div style="left:23px;top:501px;width:1px;height:15px;background:#ffffff;"></div>
<div style="left:23px;top:516px;width:13px;height:1px;background:#000;"></div>
<div style="left:35px;top:501px;width:1px;height:16px;background:#000;"></div>
<div style="left:36px;top:517px;width:1060px;height:1px;background:#808080;"></div>
<div style="left:23px;top:518px;width:12px;height:1px;background:#ffffff;"></div>
<div style="left:23px;top:518px;width:1px;height:9px;background:#ffffff;"></div>
<div style="left:35px;top:518px;width:1px;height:9px;background:#000;"></div>
<div style="left:113px;top:432px;width:1px;height:95px;background:#808080;"></div>
<div style="left:183px;top:432px;width:1px;height:95px;background:#808080;"></div>
<div style="left:239px;top:432px;width:1px;height:95px;background:#808080;"></div>
<div style="left:288px;top:432px;width:1px;height:95px;background:#808080;"></div>
<div style="left:330px;top:432px;width:1px;height:95px;background:#808080;"></div>
<div style="left:456px;top:432px;width:1px;height:95px;background:#808080;"></div>
<div style="left:582px;top:432px;width:1px;height:95px;background:#808080;"></div>
<div style="left:811px;top:432px;width:1px;height:95px;background:#808080;"></div>
<div style="left:930px;top:432px;width:1px;height:95px;background:#808080;"></div>
<div style="left:22px;top:416px;width:1074px;height:111px;overflow:hidden;">
<div style="left:62.50px;top:16px;font-size:11px;line-height:16px;height:16px;white-space:pre;color:#000;-webkit-text-stroke:0.3px #000;">1992</div>
<div style="left:94.00px;top:16px;font-size:11px;line-height:16px;height:16px;white-space:pre;color:#000;-webkit-text-stroke:0.3px #000;">Point</div>
<div style="left:164.00px;top:16px;font-size:11px;line-height:16px;height:16px;white-space:pre;color:#000;-webkit-text-stroke:0.3px #000;">M</div>
<div style="left:249.75px;top:16px;font-size:11px;line-height:16px;height:16px;white-space:pre;color:#000;-webkit-text-stroke:0.3px #000;">90</div>
<div style="left:269.00px;top:16px;font-size:11px;line-height:16px;height:16px;white-space:pre;color:#000;-webkit-text-stroke:0.3px #000;">R</div>
<div style="left:374.28px;top:16px;font-size:11px;line-height:16px;height:16px;white-space:pre;color:#000;-webkit-text-stroke:0.3px #000;">-71.123163</div>
<div style="left:503.94px;top:16px;font-size:11px;line-height:16px;height:16px;white-space:pre;color:#000;-webkit-text-stroke:0.3px #000;">42.341561</div>
<div style="left:563.00px;top:16px;font-size:11px;line-height:16px;height:16px;white-space:pre;color:#000;-webkit-text-stroke:0.3px #000;letter-spacing:-0.380px;">1368 | | | BEACON | ST | | 02446</div>
<div style="left:882.56px;top:16px;font-size:11px;line-height:16px;height:16px;white-space:pre;color:#000;-webkit-text-stroke:0.3px #000;">16.7</div>
<div style="left:911.00px;top:16px;font-size:11px;line-height:16px;height:16px;white-space:pre;color:#000;-webkit-text-stroke:0.3px #000;letter-spacing:-0.150px;">1368 Beacon St # 105</div>
<div style="left:62.50px;top:33px;font-size:11px;line-height:16px;height:16px;white-space:pre;color:#000;-webkit-text-stroke:0.3px #000;">1993</div>
<div style="left:94.00px;top:33px;font-size:11px;line-height:16px;height:16px;white-space:pre;color:#000;-webkit-text-stroke:0.3px #000;">Point</div>
<div style="left:164.00px;top:33px;font-size:11px;line-height:16px;height:16px;white-space:pre;color:#000;-webkit-text-stroke:0.3px #000;">U</div>
<div style="left:255.88px;top:33px;font-size:11px;line-height:16px;height:16px;white-space:pre;color:#000;-webkit-text-stroke:0.3px #000;">0</div>
<div style="left:423.88px;top:33px;font-size:11px;line-height:16px;height:16px;white-space:pre;color:#000;-webkit-text-stroke:0.3px #000;">0</div>
<div style="left:549.88px;top:33px;font-size:11px;line-height:16px;height:16px;white-space:pre;color:#000;-webkit-text-stroke:0.3px #000;">0</div>
<div style="left:563.00px;top:33px;font-size:11px;line-height:16px;height:16px;white-space:pre;color:#000;-webkit-text-stroke:0.3px #000;letter-spacing:-0.328px;">1585 | | | COMMONWEALTH | AVE | | 02135</div>
<div style="left:897.88px;top:33px;font-size:11px;line-height:16px;height:16px;white-space:pre;color:#000;-webkit-text-stroke:0.3px #000;">0</div>
<div style="left:911.00px;top:33px;font-size:11px;line-height:16px;height:16px;white-space:pre;color:#000;-webkit-text-stroke:0.3px #000;letter-spacing:-0.106px;">1585 Commonwealth Ave</div>
<div style="left:62.50px;top:50px;font-size:11px;line-height:16px;height:16px;white-space:pre;color:#000;-webkit-text-stroke:0.3px #000;">1994</div>
<div style="left:94.00px;top:50px;font-size:11px;line-height:16px;height:16px;white-space:pre;color:#000;-webkit-text-stroke:0.3px #000;">Point</div>
<div style="left:164.00px;top:50px;font-size:11px;line-height:16px;height:16px;white-space:pre;color:#000;-webkit-text-stroke:0.3px #000;">M</div>
<div style="left:249.75px;top:50px;font-size:11px;line-height:16px;height:16px;white-space:pre;color:#000;-webkit-text-stroke:0.3px #000;">90</div>
<div style="left:269.00px;top:50px;font-size:11px;line-height:16px;height:16px;white-space:pre;color:#000;-webkit-text-stroke:0.3px #000;">R</div>
<div style="left:374.28px;top:50px;font-size:11px;line-height:16px;height:16px;white-space:pre;color:#000;-webkit-text-stroke:0.3px #000;">-71.150621</div>
<div style="left:503.94px;top:50px;font-size:11px;line-height:16px;height:16px;white-space:pre;color:#000;-webkit-text-stroke:0.3px #000;">42.348646</div>
<div style="left:563.00px;top:50px;font-size:11px;line-height:16px;height:16px;white-space:pre;color:#000;-webkit-text-stroke:0.3px #000;letter-spacing:-0.364px;">280 | | | WASHINGTON | ST | | 02135</div>
<div style="left:891.75px;top:50px;font-size:11px;line-height:16px;height:16px;white-space:pre;color:#000;-webkit-text-stroke:0.3px #000;">80</div>
<div style="left:911.00px;top:50px;font-size:11px;line-height:16px;height:16px;white-space:pre;color:#000;-webkit-text-stroke:0.3px #000;letter-spacing:-0.098px;">280 Washington St # 105</div>
<div style="left:62.50px;top:67px;font-size:11px;line-height:16px;height:16px;white-space:pre;color:#000;-webkit-text-stroke:0.3px #000;">1995</div>
<div style="left:94.00px;top:67px;font-size:11px;line-height:16px;height:16px;white-space:pre;color:#000;-webkit-text-stroke:0.3px #000;">Point</div>
<div style="left:164.00px;top:67px;font-size:11px;line-height:16px;height:16px;white-space:pre;color:#000;-webkit-text-stroke:0.3px #000;">M</div>
<div style="left:249.75px;top:67px;font-size:11px;line-height:16px;height:16px;white-space:pre;color:#000;-webkit-text-stroke:0.3px #000;">90</div>
<div style="left:269.00px;top:67px;font-size:11px;line-height:16px;height:16px;white-space:pre;color:#000;-webkit-text-stroke:0.3px #000;">R</div>
<div style="left:374.28px;top:67px;font-size:11px;line-height:16px;height:16px;white-space:pre;color:#000;-webkit-text-stroke:0.3px #000;">-71.122058</div>
<div style="left:503.94px;top:67px;font-size:11px;line-height:16px;height:16px;white-space:pre;color:#000;-webkit-text-stroke:0.3px #000;">42.342445</div>
<div style="left:563.00px;top:67px;font-size:11px;line-height:16px;height:16px;white-space:pre;color:#000;-webkit-text-stroke:0.3px #000;letter-spacing:-0.261px;">318 | | | HARVARD | ST | | 02446</div>
<div style="left:882.56px;top:67px;font-size:11px;line-height:16px;height:16px;white-space:pre;color:#000;-webkit-text-stroke:0.3px #000;">30.6</div>
<div style="left:911.00px;top:67px;font-size:11px;line-height:16px;height:16px;white-space:pre;color:#000;-webkit-text-stroke:0.3px #000;letter-spacing:-0.145px;">318 Harvard St</div>
<div style="left:62.50px;top:84px;font-size:11px;line-height:16px;height:16px;white-space:pre;color:#000;-webkit-text-stroke:0.3px #000;">1996</div>
<div style="left:94.00px;top:84px;font-size:11px;line-height:16px;height:16px;white-space:pre;color:#000;-webkit-text-stroke:0.3px #000;">Point</div>
<div style="left:164.00px;top:84px;font-size:11px;line-height:16px;height:16px;white-space:pre;color:#000;-webkit-text-stroke:0.3px #000;">U</div>
<div style="left:255.88px;top:84px;font-size:11px;line-height:16px;height:16px;white-space:pre;color:#000;-webkit-text-stroke:0.3px #000;">0</div>
<div style="left:423.88px;top:84px;font-size:11px;line-height:16px;height:16px;white-space:pre;color:#000;-webkit-text-stroke:0.3px #000;">0</div>
<div style="left:549.88px;top:84px;font-size:11px;line-height:16px;height:16px;white-space:pre;color:#000;-webkit-text-stroke:0.3px #000;">0</div>
<div style="left:563.00px;top:84px;font-size:11px;line-height:16px;height:16px;white-space:pre;color:#000;-webkit-text-stroke:0.3px #000;letter-spacing:-0.380px;">1051 | | | BEACON | ST | | 02446</div>
<div style="left:897.88px;top:84px;font-size:11px;line-height:16px;height:16px;white-space:pre;color:#000;-webkit-text-stroke:0.3px #000;">0</div>
<div style="left:911.00px;top:84px;font-size:11px;line-height:16px;height:16px;white-space:pre;color:#000;-webkit-text-stroke:0.3px #000;letter-spacing:-0.150px;">1051 Beacon St # 409</div>
<div style="left:62.50px;top:101px;font-size:11px;line-height:16px;height:16px;white-space:pre;color:#000;-webkit-text-stroke:0.3px #000;">1997</div>
<div style="left:94.00px;top:101px;font-size:11px;line-height:16px;height:16px;white-space:pre;color:#000;-webkit-text-stroke:0.3px #000;">Point</div>
<div style="left:164.00px;top:101px;font-size:11px;line-height:16px;height:16px;white-space:pre;color:#000;-webkit-text-stroke:0.3px #000;">M</div>
<div style="left:249.75px;top:101px;font-size:11px;line-height:16px;height:16px;white-space:pre;color:#000;-webkit-text-stroke:0.3px #000;">90</div>
<div style="left:269.00px;top:101px;font-size:11px;line-height:16px;height:16px;white-space:pre;color:#000;-webkit-text-stroke:0.3px #000;">L</div>
<div style="left:374.28px;top:101px;font-size:11px;line-height:16px;height:16px;white-space:pre;color:#000;-webkit-text-stroke:0.3px #000;">-71.139017</div>
<div style="left:503.94px;top:101px;font-size:11px;line-height:16px;height:16px;white-space:pre;color:#000;-webkit-text-stroke:0.3px #000;">42.354579</div>
<div style="left:563.00px;top:101px;font-size:11px;line-height:16px;height:16px;white-space:pre;color:#000;-webkit-text-stroke:0.3px #000;letter-spacing:-0.452px;">33 | | | EVERETT | ST | | 02134</div>
<div style="left:885.62px;top:101px;font-size:11px;line-height:16px;height:16px;white-space:pre;color:#000;-webkit-text-stroke:0.3px #000;">100</div>
<div style="left:911.00px;top:101px;font-size:11px;line-height:16px;height:16px;white-space:pre;color:#000;-webkit-text-stroke:0.3px #000;letter-spacing:0.180px;">33 Everett St</div>
</div>
<svg style="left:28px;top:487px;width:5px;height:9px;overflow:visible" viewBox="0 0 5 9" shape-rendering="crispEdges"><polygon points="0,0 5,4.5 0,9" fill="#000"/></svg>
<div style="left:582px;top:483px;width:230px;height:17px;border:1px solid #000;"></div>
<div class="dither" style="left:1096px;top:416px;width:16px;height:111px;"></div>
<div style="left:1096px;top:416px;width:16px;height:16px;background:#d4d0c8;border:1px solid;border-color:#d4d0c8 #404040 #404040 #d4d0c8;box-shadow:inset -1px -1px 0 #808080, inset 1px 1px 0 #ffffff;"></div>
<svg style="left:1100px;top:422px;width:7px;height:4px;overflow:visible" viewBox="0 0 7 4" shape-rendering="crispEdges"><polygon points="3.5,0 7,4 0,4" fill="#000"/></svg>
<div style="left:1096px;top:472px;width:16px;height:8px;background:#d4d0c8;border:1px solid;border-color:#d4d0c8 #404040 #404040 #d4d0c8;box-shadow:inset -1px -1px 0 #808080, inset 1px 1px 0 #ffffff;"></div>
<div style="left:1096px;top:511px;width:16px;height:16px;background:#d4d0c8;border:1px solid;border-color:#d4d0c8 #404040 #404040 #d4d0c8;box-shadow:inset -1px -1px 0 #808080, inset 1px 1px 0 #ffffff;"></div>
<svg style="left:1100px;top:517px;width:7px;height:4px;overflow:visible" viewBox="0 0 7 4" shape-rendering="crispEdges"><polygon points="0,0 7,0 3.5,4" fill="#000"/></svg>
<div class="dither" style="left:22px;top:527px;width:1074px;height:16px;"></div>
<div style="left:22px;top:527px;width:16px;height:16px;background:#d4d0c8;border:1px solid;border-color:#d4d0c8 #404040 #404040 #d4d0c8;box-shadow:inset -1px -1px 0 #808080, inset 1px 1px 0 #ffffff;"></div>
<svg style="left:27px;top:531px;width:4px;height:7px;overflow:visible" viewBox="0 0 4 7" shape-rendering="crispEdges"><polygon points="4,0 4,7 0,3.5" fill="#000"/></svg>
<div style="left:38px;top:527px;width:409px;height:16px;background:#d4d0c8;border:1px solid;border-color:#d4d0c8 #404040 #404040 #d4d0c8;box-shadow:inset -1px -1px 0 #808080, inset 1px 1px 0 #ffffff;"></div>
<div style="left:1080px;top:527px;width:16px;height:16px;background:#d4d0c8;border:1px solid;border-color:#d4d0c8 #404040 #404040 #d4d0c8;box-shadow:inset -1px -1px 0 #808080, inset 1px 1px 0 #ffffff;"></div>
<svg style="left:1087px;top:531px;width:4px;height:7px;overflow:visible" viewBox="0 0 4 7" shape-rendering="crispEdges"><polygon points="0,0 0,7 4,3.5" fill="#000"/></svg>
<div style="left:1096px;top:527px;width:16px;height:16px;background:#d4d0c8;"></div>
<div style="left:20px;top:543px;width:1094px;height:1px;background:#ffffff;"></div>
<div style="left:1113px;top:414px;width:1px;height:130px;background:#ffffff;"></div>
<div style="left:26.00px;top:552px;font-size:12px;line-height:16px;height:16px;white-space:pre;color:#000;-webkit-text-stroke:0.3px #000;letter-spacing:-0.859px;">Record:</div>
<div style="left:67px;top:553px;width:17px;height:15px;background:#d4d0c8;border:1px solid;border-color:#ffffff #404040 #404040 #ffffff;box-shadow:inset -1px -1px 0 #808080;"></div>
<div style="left:85px;top:553px;width:16px;height:15px;background:#d4d0c8;border:1px solid;border-color:#ffffff #404040 #404040 #ffffff;box-shadow:inset -1px -1px 0 #808080;"></div>
<svg style="left:71px;top:557px;width:9px;height:7px;overflow:visible" viewBox="0 0 9 7" shape-rendering="crispEdges"><rect x="0" y="0" width="2" height="7" fill="#000"/><polygon points="7,0 7,7 3,3.5" fill="#000"/></svg>
<svg style="left:90px;top:557px;width:4px;height:7px;overflow:visible" viewBox="0 0 4 7" shape-rendering="crispEdges"><polygon points="4,0 4,7 0,3.5" fill="#000"/></svg>
<div style="left:104px;top:550px;width:59px;height:19px;background:#fff;border:1px solid;border-color:#808080 #ffffff #ffffff #808080;box-shadow:inset 1px 1px 0 #404040, inset -1px -1px 0 #d4d0c8;"></div>
<div style="left:135.00px;top:552px;font-size:12px;line-height:16px;height:16px;white-space:pre;color:#000;-webkit-text-stroke:0.3px #000;letter-spacing:-0.672px;">1996</div>
<div style="left:164px;top:553px;width:16px;height:15px;background:#d4d0c8;border:1px solid;border-color:#ffffff #404040 #404040 #ffffff;box-shadow:inset -1px -1px 0 #808080;"></div>
<div style="left:181px;top:553px;width:17px;height:15px;background:#d4d0c8;border:1px solid;border-color:#ffffff #404040 #404040 #ffffff;box-shadow:inset -1px -1px 0 #808080;"></div>
<svg style="left:170px;top:557px;width:4px;height:7px;overflow:visible" viewBox="0 0 4 7" shape-rendering="crispEdges"><polygon points="0,0 0,7 4,3.5" fill="#000"/></svg>
<svg style="left:185px;top:557px;width:9px;height:7px;overflow:visible" viewBox="0 0 9 7" shape-rendering="crispEdges"><polygon points="0,0 0,7 4,3.5" fill="#000"/><rect x="6" y="0" width="2" height="7" fill="#000"/></svg>
<div style="left:216.00px;top:552px;font-size:12px;line-height:16px;height:16px;white-space:pre;color:#000;-webkit-text-stroke:0.3px #000;letter-spacing:-1.069px;">Show:</div>
<div class="dither" style="left:248px;top:550px;width:26px;height:22px;border:1px solid;border-color:#404040 #ffffff #ffffff #404040;box-shadow:inset 1px 1px 0 #808080;"></div>
<div style="left:255.00px;top:553px;font-size:12px;line-height:16px;height:16px;white-space:pre;color:#000;-webkit-text-stroke:0.3px #000;letter-spacing:-0.115px;">All</div>
<div style="left:275px;top:550px;width:56px;height:22px;background:#d4d0c8;border:1px solid;border-color:#ffffff #404040 #404040 #ffffff;box-shadow:inset -1px -1px 0 #808080;"></div>
<div style="left:283.00px;top:552px;font-size:12px;line-height:16px;height:16px;white-space:pre;color:#000;-webkit-text-stroke:0.3px #000;letter-spacing:-0.711px;">Selected</div>
<div style="left:338.00px;top:552px;font-size:12px;line-height:16px;height:16px;white-space:pre;color:#000;-webkit-text-stroke:0.3px #000;letter-spacing:-0.580px;">Records  (1 out of 3451 Selected.)</div>
<div style="left:533px;top:550px;width:78px;height:22px;background:#d4d0c8;border:1px solid;border-color:#ffffff #404040 #404040 #ffffff;box-shadow:inset -1px -1px 0 #808080;"></div>
<div style="left:555.00px;top:554px;font-size:12px;line-height:16px;height:16px;white-space:pre;color:#000;-webkit-text-stroke:0.3px #000;letter-spacing:-0.906px;">Options</div>
<svg style="left:600px;top:560px;width:5px;height:3px;overflow:visible" viewBox="0 0 5 3" shape-rendering="crispEdges"><polygon points="0,0 5,0 2.5,3" fill="#000"/></svg>
<div style="left:0px;top:611px;width:261px;height:1px;background:#808080;"></div>
<div style="left:0px;top:612px;width:1136px;height:1px;background:#ffffff;"></div>
<div style="left:0px;top:640px;width:1136px;height:1px;background:#808080;"></div>
<div style="left:0px;top:641px;width:1138px;height:1px;background:#808080;"></div>
<div style="left:0px;top:642px;width:1138px;height:1px;background:#ffffff;"></div>
<div style="left:0px;top:614px;width:2px;height:1px;background:#ffffff;"></div>
<div style="left:1px;top:615px;width:1px;height:23px;background:#808080;"></div>
<div style="left:0px;top:637px;width:2px;height:1px;background:#808080;"></div>
<div style="left:11.00px;top:619px;font-size:11px;line-height:16px;height:16px;white-space:pre;color:#000;-webkit-text-stroke:0.3px #000;letter-spacing:-0.192px;"><u>D</u>rawing</div>
<svg style="left:57px;top:624px;width:7px;height:4px;overflow:visible" viewBox="0 0 7 4" shape-rendering="crispEdges"><polygon points="0,0 7,0 3.5,4" fill="#000"/></svg>
<svg style="left:83px;top:618px;width:10px;height:16px;overflow:visible" viewBox="0 0 10 16"><path d="M0,0 V13 L3,10.2 L5.4,15 L8.2,13.8 L5.8,9.2 H9.6 Z" fill="#000"/></svg>
<svg style="left:101px;top:616px;width:18px;height:18px;overflow:visible" viewBox="0 0 18 18"><path d="M6.3,15.3 A7,7 0 1 1 15.6,11.5" fill="none" stroke="#fff" stroke-width="1.2" transform="translate(1,1)"/>
<path d="M6.3,15.3 A7,7 0 1 1 15.6,11.5" fill="none" stroke="#787878" stroke-width="1.3"/>
<rect x="7.5" y="7.5" width="3" height="3" fill="#fff" stroke="#787878"/><path d="M13,11.5 H17 L14.3,16 Z" fill="#787878"/><path d="M17.3,12 L15,16.3" stroke="#fff"/></svg>
<svg style="left:126px;top:617px;width:17px;height:17px;overflow:visible" viewBox="0 0 17 17"><path d="M16.5,1 V10.5 H8" fill="none" stroke="#fff"/><rect x="5.5" y="0.5" width="10" height="9" fill="#d4d0c8" stroke="#787878"/>
<rect x="8" y="2.5" width="2" height="2" fill="#787878"/><rect x="12" y="2.5" width="2" height="2" fill="#787878"/><rect x="12" y="6.5" width="2" height="2" fill="#787878"/>
<circle cx="4.5" cy="8.5" r="3.6" fill="#d4d0c8" stroke="#787878" stroke-width="1.1"/><path d="M2.5,8.5H6.5M4.5,6.5V10.5" stroke="#787878"/>
<path d="M8,11.5 L11.8,15.3" stroke="#fff" stroke-width="2" /><path d="M7.2,11.2 L11,15" stroke="#787878" stroke-width="2.2"/></svg>
<div style="left:149px;top:615px;width:1px;height:23px;background:#808080;"></div>
<div style="left:150px;top:615px;width:1px;height:23px;background:#ffffff;"></div>
<div style="left:159px;top:619px;width:12px;height:12px;background:#fff;border:1px solid #000;"></div>
<svg style="left:181px;top:622px;width:7px;height:4px;overflow:visible" viewBox="0 0 7 4" shape-rendering="crispEdges"><polygon points="0,0 7,0 3.5,4" fill="#000"/></svg>
<div style="left:196px;top:615px;width:24px;height:21px;border:1px solid;border-color:#ffffff #808080 #808080 #ffffff;"></div>
<div style="left:221px;top:615px;width:13px;height:21px;border:1px solid;border-color:#ffffff #808080 #808080 #ffffff;"></div>
<div style="left:201.00px;top:618px;font-size:18px;line-height:16px;height:16px;white-space:pre;color:#000;-webkit-text-stroke:0.3px #000;font-weight:bold;font-family:'Liberation Serif',serif;">A</div>
<svg style="left:224px;top:623px;width:7px;height:4px;overflow:visible" viewBox="0 0 7 4" shape-rendering="crispEdges"><polygon points="0,0 7,0 3.5,4" fill="#000"/></svg>
<svg style="left:242px;top:618px;width:17px;height:14px;overflow:visible" viewBox="0 0 17 14"><path d="M2.5,2.5 L14.5,1.5 L9.5,6.5 L14.5,11.5 L2.5,11.5 Z" fill="none" stroke="#808080"/>
<rect x="1" y="1" width="3" height="3" fill="#808080"/><rect x="13" y="0" width="3" height="3" fill="#808080"/><rect x="8" y="5" width="3" height="3" fill="#808080"/><rect x="13" y="10" width="3" height="3" fill="#808080"/><rect x="1" y="10" width="3" height="3" fill="#808080"/>
<path d="M3,13.5 H16.5 M16.5,1 V4" stroke="#fff" fill="none"/></svg>
<div style="left:265px;top:615px;width:1px;height:23px;background:#808080;"></div>
<div style="left:266px;top:615px;width:1px;height:23px;background:#ffffff;"></div>
<div style="left:269px;top:615px;width:170px;height:21px;background:#fff;border:1px solid;border-color:#808080 #ffffff #ffffff #808080;box-shadow:inset 1px 1px 0 #404040, inset -1px -1px 0 #d4d0c8;"></div>
<div style="left:291.00px;top:618px;font-size:11px;line-height:16px;height:16px;white-space:pre;color:#000;-webkit-text-stroke:0.3px #000;letter-spacing:-0.400px;">Arial</div>
<div style="left:421px;top:617px;width:16px;height:17px;background:#d4d0c8;border:1px solid;border-color:#ffffff #404040 #404040 #ffffff;box-shadow:inset -1px -1px 0 #808080;"></div>
<svg style="left:425px;top:623px;width:7px;height:4px;overflow:visible" viewBox="0 0 7 4" shape-rendering="crispEdges"><polygon points="0,0 7,0 3.5,4" fill="#000"/></svg>
<svg style="left:273px;top:618px;width:14px;height:15px;overflow:visible" viewBox="0 0 14 15"><path d="M0.5,0.5 H9.5 L12.5,3.5 V14.5 H0.5 Z" fill="#a6caf0" stroke="#6080c0"/><text x="2" y="12" font-family="Liberation Serif" font-style="italic" font-weight="bold" font-size="13" fill="#004000">O</text></svg>
<div style="left:445px;top:615px;width:45px;height:21px;background:#fff;border:1px solid;border-color:#808080 #ffffff #ffffff #808080;box-shadow:inset 1px 1px 0 #404040, inset -1px -1px 0 #d4d0c8;"></div>
<div style="left:449.00px;top:617px;font-size:11px;line-height:16px;height:16px;white-space:pre;color:#000;-webkit-text-stroke:0.3px #000;letter-spacing:-0.125px;">10</div>
<div style="left:472px;top:617px;width:16px;height:17px;background:#d4d0c8;border:1px solid;border-color:#ffffff #404040 #404040 #ffffff;box-shadow:inset -1px -1px 0 #808080;"></div>
<svg style="left:476px;top:623px;width:7px;height:4px;overflow:visible" viewBox="0 0 7 4" shape-rendering="crispEdges"><polygon points="0,0 7,0 3.5,4" fill="#000"/></svg>
<div style="left:504.00px;top:619px;font-size:13px;line-height:16px;height:16px;white-space:pre;color:#000;-webkit-text-stroke:0.3px #000;font-weight:bold;font-family:'Liberation Serif',serif;">B</div>
<div style="left:529.00px;top:619px;font-size:13px;line-height:16px;height:16px;white-space:pre;color:#000;-webkit-text-stroke:0.3px #000;font-weight:bold;font-style:italic;font-family:'Liberation Serif',serif;">I</div>
<div style="left:551.00px;top:619px;font-size:13px;line-height:16px;height:16px;white-space:pre;color:#000;-webkit-text-stroke:0.3px #000;font-weight:bold;font-family:'Liberation Serif',serif;">U</div>
<div style="left:551px;top:631px;width:9px;height:1px;background:#000;"></div>
<div style="left:570px;top:615px;width:1px;height:23px;background:#808080;"></div>
<div style="left:571px;top:615px;width:1px;height:23px;background:#ffffff;"></div>
<div style="left:579.00px;top:615px;font-size:16px;line-height:16px;height:16px;white-space:pre;color:#000;-webkit-text-stroke:0.3px #000;font-family:'Liberation Serif',serif;">A</div>
<div style="left:577px;top:630px;width:18px;height:3px;background:#000;"></div>
<svg style="left:601px;top:622px;width:7px;height:4px;overflow:visible" viewBox="0 0 7 4" shape-rendering="crispEdges"><polygon points="0,0 7,0 3.5,4" fill="#000"/></svg>
<svg style="left:622px;top:616px;width:15px;height:13px;overflow:visible" viewBox="0 0 15 13"><path d="M2.5,7.5 L7.5,2.5 L12.5,7.5 L7.5,12 Z" fill="#fff" stroke="#000"/><path d="M6,1 Q9,-1 9,4" fill="none" stroke="#000080" stroke-width="1.2"/><path d="M11,5 Q14.5,6 13.5,11 Q12,8 11,8Z" fill="#000080"/></svg>
<div style="left:620px;top:630px;width:18px;height:3px;background:#ffffc0;"></div>
<svg style="left:644px;top:622px;width:7px;height:4px;overflow:visible" viewBox="0 0 7 4" shape-rendering="crispEdges"><polygon points="0,0 7,0 3.5,4" fill="#000"/></svg>
<svg style="left:663px;top:616px;width:18px;height:14px;overflow:visible" viewBox="0 0 18 14"><path d="M3,12 L9,9 L15,2 L17,3.5 L11,11 Z" fill="#000080" stroke="#000" stroke-width="0.6"/><circle cx="16" cy="2" r="1.6" fill="#ffff00"/><path d="M1,12.5 L6,10" stroke="#008080" stroke-width="1.5"/></svg>
<div style="left:663px;top:630px;width:18px;height:3px;background:#000;"></div>
<svg style="left:687px;top:622px;width:7px;height:4px;overflow:visible" viewBox="0 0 7 4" shape-rendering="crispEdges"><polygon points="0,0 7,0 3.5,4" fill="#000"/></svg>
<svg style="left:712px;top:619px;width:7px;height:7px;overflow:visible" viewBox="0 0 7 7"><circle cx="3.5" cy="3.5" r="2.8" fill="#0000ff"/></svg>
<div style="left:706px;top:630px;width:18px;height:3px;background:#000;"></div>
<svg style="left:730px;top:622px;width:7px;height:4px;overflow:visible" viewBox="0 0 7 4" shape-rendering="crispEdges"><polygon points="0,0 7,0 3.5,4" fill="#000"/></svg>
<div style="left:749px;top:611px;width:1px;height:30px;background:#808080;"></div>
<div style="left:751px;top:611px;width:1px;height:30px;background:#ffffff;"></div>
<div style="left:752px;top:613px;width:3px;height:25px;border:1px solid;border-color:#ffffff #808080 #808080 #ffffff;border-bottom-color:#808080;"></div>
<div style="left:763.00px;top:619px;font-size:11px;line-height:16px;height:16px;white-space:pre;color:#000;-webkit-text-stroke:0.3px #000;letter-spacing:-0.125px;">Edito<u>r</u></div>
<svg style="left:797px;top:624px;width:7px;height:4px;overflow:visible" viewBox="0 0 7 4" shape-rendering="crispEdges"><polygon points="0,0 7,0 3.5,4" fill="#000"/></svg>
<div style="left:818px;top:615px;width:1px;height:23px;background:#808080;"></div>
<div style="left:819px;top:615px;width:1px;height:23px;background:#ffffff;"></div>
<svg style="left:830px;top:619px;width:10px;height:12px;overflow:visible" viewBox="0 0 10 12"><path d="M0.5,0 L9.5,7 L4.5,7.5 L0.5,11.5 Z" fill="#808080"/><path d="M1.5,12 L5,8.5 L10.5,8" fill="none" stroke="#fff"/></svg>
<div style="left:848px;top:615px;width:1px;height:23px;background:#808080;"></div>
<div style="left:849px;top:615px;width:1px;height:23px;background:#ffffff;"></div>
<div style="left:852px;top:615px;width:25px;height:21px;border:1px solid;border-color:#ffffff #808080 #808080 #ffffff;"></div>
<div style="left:877px;top:615px;width:13px;height:21px;border:1px solid;border-color:#ffffff #808080 #808080 #ffffff;"></div>
<svg style="left:856px;top:617px;width:17px;height:16px;overflow:visible" viewBox="0 0 17 16"><path d="M1,14 L2.5,9.5 L11,1 L15,4.5 L6,13 Z" fill="#808080"/><path d="M2,14.5 L7,13.5 L16,5" fill="none" stroke="#fff"/><path d="M2.5,10 L5,12.5" stroke="#d4d0c8"/></svg>
<svg style="left:881px;top:623px;width:7px;height:4px;overflow:visible" viewBox="0 0 7 4" shape-rendering="crispEdges"><polygon points="0,0 7,0 3.5,4" fill="#000"/></svg>
<div style="left:902.00px;top:618px;font-size:11px;line-height:16px;height:16px;white-space:pre;color:#fff;-webkit-text-stroke:0.3px #fff;letter-spacing:-0.338px;">Task:</div>
<div style="left:901.00px;top:617px;font-size:11px;line-height:16px;height:16px;white-space:pre;color:#808080;-webkit-text-stroke:0.3px #808080;letter-spacing:-0.338px;">Task:</div>
<div style="left:931px;top:615px;width:183px;height:21px;background:#d4d0c8;border:1px solid;border-color:#808080 #ffffff #ffffff #808080;box-shadow:inset 1px 1px 0 #404040, inset -1px -1px 0 #d4d0c8;"></div>
<div style="left:935.00px;top:618px;font-size:11px;line-height:16px;height:16px;white-space:pre;color:#808080;-webkit-text-stroke:0.3px #808080;letter-spacing:-0.116px;">Create New Feature</div>
<div style="left:1096px;top:617px;width:16px;height:17px;background:#d4d0c8;border:1px solid;border-color:#ffffff #404040 #404040 #ffffff;box-shadow:inset -1px -1px 0 #808080;"></div>
<svg style="left:1100px;top:624px;width:7px;height:4px;overflow:visible" viewBox="0 0 7 4" shape-rendering="crispEdges"><polygon points="0,0 7,0 3.5,4" fill="#000"/></svg>
<div style="left:1122px;top:615px;width:1px;height:23px;background:#808080;"></div>
<div style="left:1123px;top:615px;width:1px;height:23px;background:#ffffff;"></div>
<div style="left:1131.00px;top:618px;font-size:11px;line-height:16px;height:16px;white-space:pre;color:#808080;-webkit-text-stroke:0.3px #808080;">T</div>
<div style="left:778px;top:645px;width:22px;height:16px;border:1px solid;border-color:#808080 #ffffff #ffffff #808080;"></div>
<div style="left:802px;top:645px;width:158px;height:16px;border:1px solid;border-color:#808080 #ffffff #ffffff #808080;"></div>
<div style="left:962px;top:645px;width:156px;height:16px;border:1px solid;border-color:#808080 #ffffff #ffffff #808080;"></div>
<div style="left:805.00px;top:645px;font-size:11px;line-height:16px;height:16px;white-space:pre;color:#000;-webkit-text-stroke:0.3px #000;letter-spacing:-0.072px;">230776.80  899194.73 Meters</div>
<svg style="left:1122px;top:648px;width:14px;height:13px;overflow:visible" viewBox="0 0 14 13" shape-rendering="crispEdges"><path d="M13,1 L1,13 M13,5 L5,13 M13,9 L9,13" stroke="#808080"/><path d="M13,0 L0,13 M13,4 L4,13 M13,8 L8,13" stroke="#fff"/></svg>
<div style="left:0px;top:665px;width:1141px;height:2px;background:#fff;"></div>
<div style="left:0px;top:665px;width:25px;height:2px;background:#c0c0c0;"></div>
<div style="left:28px;top:665px;width:6px;height:2px;background:#808080;"></div>
<div style="left:45px;top:665px;width:5px;height:1px;background:#000;"></div>
<div style="left:132px;top:665px;width:1px;height:2px;background:#2060c0;"></div>
<div style="left:133px;top:665px;width:12px;height:2px;background:#d4d0c8;"></div>
<div style="left:392px;top:665px;width:8px;height:2px;background:#d4d0c8;"></div>
<div style="left:425px;top:666px;width:3px;height:1px;background:#0f9a3e;"></div>
<div style="left:436px;top:666px;width:3px;height:1px;background:#0f9a3e;"></div>
<div style="left:450px;top:666px;width:3px;height:1px;background:#0f9a3e;"></div>
<div style="left:470px;top:666px;width:3px;height:1px;background:#0f9a3e;"></div>
<div style="left:520px;top:666px;width:3px;height:1px;background:#0f9a3e;"></div>
<div style="left:545px;top:666px;width:3px;height:1px;background:#0f9a3e;"></div>
<div style="left:560px;top:666px;width:3px;height:1px;background:#0f9a3e;"></div>
<div style="left:580px;top:666px;width:3px;height:1px;background:#0f9a3e;"></div>
<div style="left:600px;top:666px;width:3px;height:1px;background:#0f9a3e;"></div>
<div style="left:618px;top:666px;width:3px;height:1px;background:#0f9a3e;"></div>
<div style="left:640px;top:666px;width:3px;height:1px;background:#0f9a3e;"></div>
<div style="left:665px;top:666px;width:3px;height:1px;background:#0f9a3e;"></div>
<div style="left:700px;top:666px;width:3px;height:1px;background:#0f9a3e;"></div>
<div style="left:730px;top:666px;width:3px;height:1px;background:#0f9a3e;"></div>
<div style="left:760px;top:666px;width:3px;height:1px;background:#0f9a3e;"></div>
<div style="left:790px;top:666px;width:3px;height:1px;background:#0f9a3e;"></div>
<div style="left:820px;top:666px;width:3px;height:1px;background:#0f9a3e;"></div>
<div style="left:860px;top:666px;width:3px;height:1px;background:#0f9a3e;"></div>
<div style="left:900px;top:666px;width:3px;height:1px;background:#0f9a3e;"></div>
<div style="left:930px;top:666px;width:3px;height:1px;background:#0f9a3e;"></div>
<div style="left:960px;top:666px;width:3px;height:1px;background:#0f9a3e;"></div>
<div style="left:985px;top:666px;width:3px;height:1px;background:#0f9a3e;"></div>
<div style="left:1010px;top:666px;width:3px;height:1px;background:#0f9a3e;"></div>
<div style="left:1040px;top:666px;width:3px;height:1px;background:#0f9a3e;"></div>
<div style="left:1060px;top:666px;width:3px;height:1px;background:#0f9a3e;"></div>
<div style="left:1080px;top:666px;width:3px;height:1px;background:#0f9a3e;"></div>
<div style="left:1100px;top:666px;width:3px;height:1px;background:#0f9a3e;"></div>
</div>
</body>
</html>
